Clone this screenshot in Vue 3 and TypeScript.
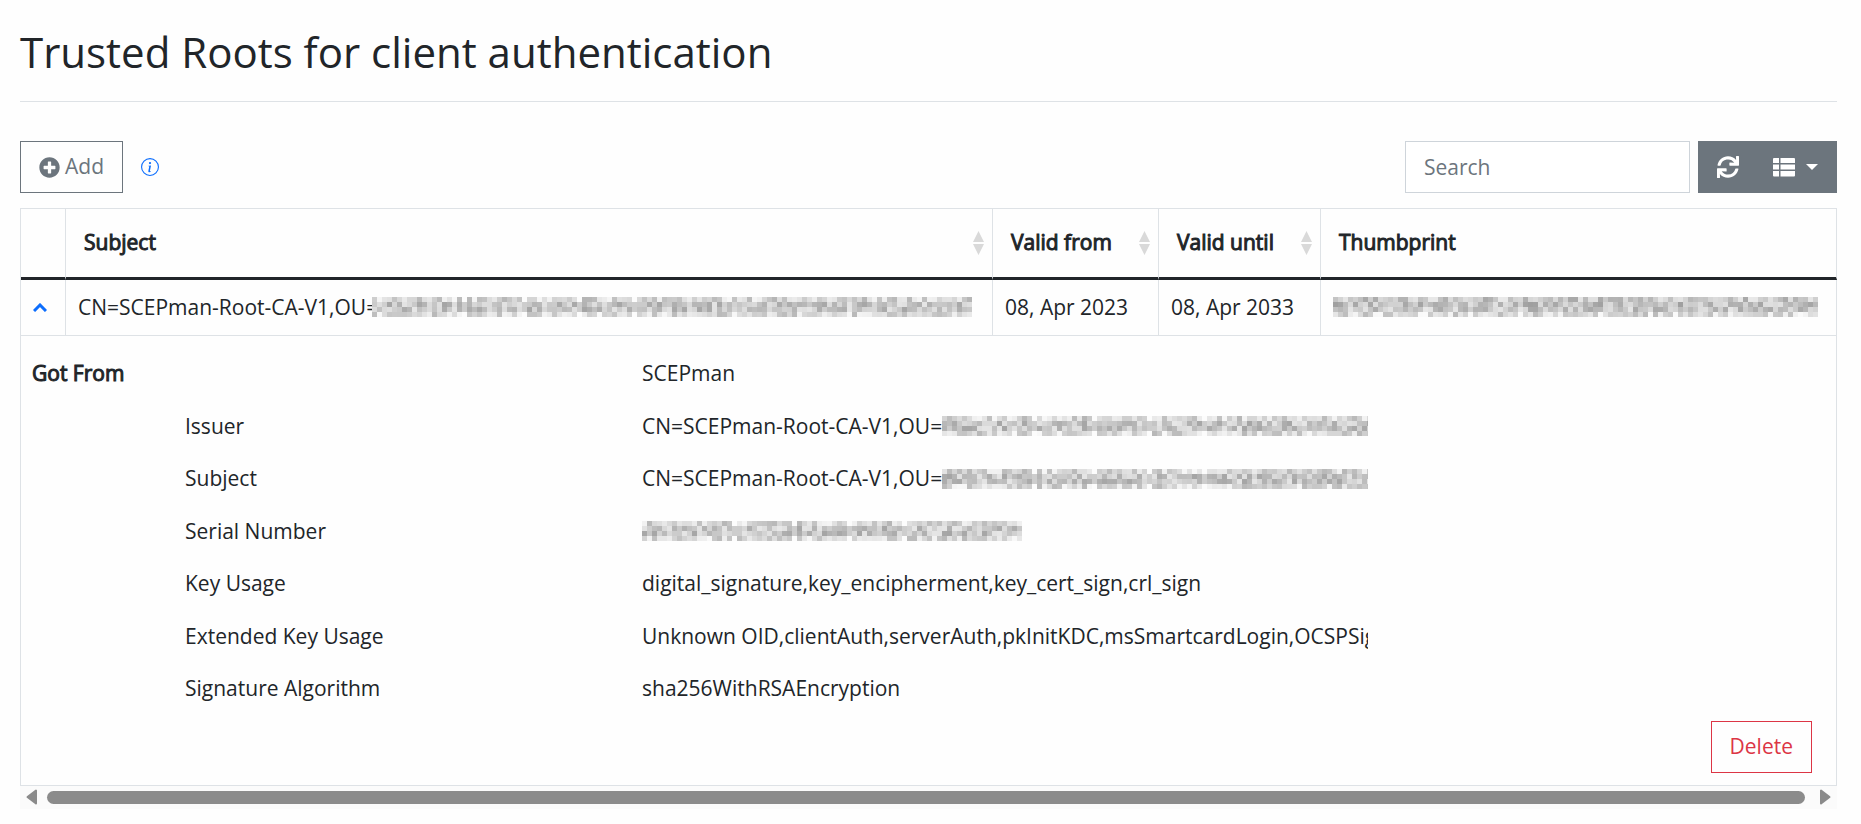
<script setup lang="ts">
import { ref } from 'vue'

interface Detail {
  label: string
  value: string
  mask?: { columns: number; seed: number }
}

interface Tile {
  x: number
  y: number
  fill: string
}

const TILE = 5
const search = ref('')
const expanded = ref(true)

const details: Detail[] = [
  { label: 'Issuer', value: 'CN=SCEPman-Root-CA-V1,OU=', mask: { columns: 86, seed: 11 } },
  { label: 'Subject', value: 'CN=SCEPman-Root-CA-V1,OU=', mask: { columns: 86, seed: 29 } },
  { label: 'Serial Number', value: '', mask: { columns: 76, seed: 47 } },
  { label: 'Key Usage', value: 'digital_signature,key_encipherment,key_cert_sign,crl_sign' },
  {
    label: 'Extended Key Usage',
    value: 'Unknown OID,clientAuth,serverAuth,pkInitKDC,msSmartcardLogin,OCSPSigning',
  },
  { label: 'Signature Algorithm', value: 'sha256WithRSAEncryption' },
]

// Grey mosaic that stands in for a redacted value.
function mosaic(columns: number, seed: number, dense = false): Tile[] {
  let state = seed
  const next = () => {
    state = (state * 16807) % 2147483647
    return state / 2147483647
  }
  for (let i = 0; i < 8; i++) next()
  const base = dense ? [200, 192, 200, 218] : [214, 198, 198, 216]
  const dashes = [18, 30, 41, 52]
  const tiles: Tile[] = []
  for (let c = 0; c < columns; c++) {
    const dash = !dense && dashes.includes(c)
    for (let r = 0; r < 4; r++) {
      const middle = r === 1 || r === 2
      let level = base[r] + Math.round((next() - 0.5) * 66)
      if (dash) level = middle ? 205 : 252
      level = Math.min(level, 254)
      tiles.push({ x: c * TILE, y: r * TILE, fill: `rgb(${level},${level},${level})` })
    }
  }
  return tiles
}

const subjectTiles = mosaic(120, 83)
const thumbTiles = mosaic(97, 61, true)
const detailTiles = details.map((d) => (d.mask ? mosaic(d.mask.columns, d.mask.seed) : []))
</script>

<template>
  <main class="page">
    <h1>Trusted Roots for client authentication</h1>

    <div class="toolbar">
      <button type="button" class="btn btn-add">
        <svg width="21" height="21" viewBox="0 0 512 512" aria-hidden="true">
          <path
            fill="currentColor"
            d="M256 8C119 8 8 119 8 256s111 248 248 248 248-111 248-248S393 8 256 8zm144 276c0 7-5 12-12 12h-92v92c0 7-5 12-12 12h-56c-7 0-12-5-12-12v-92h-92c-7 0-12-5-12-12v-56c0-7 5-12 12-12h92v-92c0-7 5-12 12-12h56c7 0 12 5 12 12v92h92c7 0 12 5 12 12v56z"
          />
        </svg>
        <span>Add</span>
      </button>
      <a href="#" class="info" aria-label="Information">
        <svg width="18" height="18" viewBox="0 0 16 16" aria-hidden="true">
          <path
            fill="currentColor"
            d="M8 15A7 7 0 1 1 8 1a7 7 0 0 1 0 14zm0 1A8 8 0 1 0 8 0a8 8 0 0 0 0 16z"
          />
          <path
            fill="currentColor"
            d="m8.93 6.588-2.29.287-.082.38.45.083c.294.07.352.176.288.469l-.738 3.468c-.194.897.105 1.319.808 1.319.545 0 1.178-.252 1.465-.598l.088-.416c-.2.176-.492.246-.686.246-.275 0-.375-.193-.304-.533L8.93 6.588zM9 4.5a1 1 0 1 1-2 0 1 1 0 0 1 2 0z"
          />
        </svg>
      </a>
      <input v-model="search" type="search" class="search" placeholder="Search" aria-label="Search" />
      <div class="group">
        <button type="button" class="btn btn-solid" aria-label="Refresh">
          <svg width="22" height="22" viewBox="0 0 512 512" aria-hidden="true">
            <path
              fill="currentColor"
              d="M440.65 12.57l4 82.77A247.160 247.160 0 0 0 255.830 8C134.730 8 33.910 94.920 12.290 209.820A12 12 0 0 0 24.090 224h49.050a12 12 0 0 0 11.670-9.260 175.910 175.910 0 0 1 317-56.940l-101.460-4.860a12 12 0 0 0-12.570 12v47.410a12 12 0 0 0 12 12H500a12 12 0 0 0 12-12V12a12 12 0 0 0-12-12h-47.370a12 12 0 0 0-11.980 12.570zM255.830 432a175.610 175.610 0 0 1-146-77.800l101.800 4.870a12 12 0 0 0 12.570-12v-47.400a12 12 0 0 0-12-12H12a12 12 0 0 0-12 12V500a12 12 0 0 0 12 12h47.350a12 12 0 0 0 12-12.600l-4.150-82.570A247.170 247.170 0 0 0 255.830 504c121.110 0 221.930-86.920 243.550-201.820a12 12 0 0 0-11.800-14.180h-49.050a12 12 0 0 0-11.670 9.260A175.860 175.860 0 0 1 255.830 432z"
            />
          </svg>
        </button>
        <button type="button" class="btn btn-solid btn-columns" aria-label="Columns">
          <svg width="22" height="22" viewBox="0 0 22 22" aria-hidden="true">
            <g fill="currentColor">
              <path d="M1 2h5v5H0V3q0-1 1-1z" />
              <path d="M7.500 2H21q1 0 1 1v4H7.500z" />
              <path d="M0 8.500h6v5H0z" />
              <path d="M7.500 8.500H22v5H7.500z" />
              <path d="M0 15h6v5.500H1q-1 0-1-1z" />
              <path d="M7.500 15H22v4.500q0 1-1 1H7.500z" />
            </g>
          </svg>
          <svg width="12" height="6" viewBox="0 0 12 6" aria-hidden="true">
            <path fill="currentColor" d="M0 0h12L6 6z" />
          </svg>
        </button>
      </div>
    </div>

    <div class="table-wrap">
      <table>
        <colgroup>
          <col class="c-toggle" />
          <col />
          <col class="c-from" />
          <col class="c-until" />
          <col class="c-thumb" />
        </colgroup>
        <thead>
          <tr>
            <th aria-label="Expand"></th>
            <th v-for="name in ['Subject', 'Valid from', 'Valid until']" :key="name" scope="col">
              <div class="th-inner">
                <span class="strong">{{ name }}</span>
                <svg width="11" height="24" viewBox="0 0 11 24" aria-hidden="true">
                  <path fill="#d9d9d9" d="M5.500 0 11 11H0zM0 13h11L5.500 24z" />
                </svg>
              </div>
            </th>
            <th scope="col">
              <div class="th-inner"><span class="strong">Thumbprint</span></div>
            </th>
          </tr>
        </thead>
        <tbody>
          <tr class="record">
            <td>
              <button
                type="button"
                class="toggle"
                aria-label="Toggle details"
                :aria-expanded="expanded"
                @click="expanded = !expanded"
              >
                <svg width="14" height="9" viewBox="0 0 14 9" aria-hidden="true">
                  <path d="M1 8l6-6 6 6" fill="none" stroke="currentColor" stroke-width="3" />
                </svg>
              </button>
            </td>
            <td>
              <div class="value">
                <span>CN=SCEPman-Root-CA-V1,OU=</span>
                <svg class="mask" width="600" height="20" shape-rendering="crispEdges" aria-hidden="true">
                  <rect v-for="(t, i) in subjectTiles" :key="i" :x="t.x" :y="t.y" width="5" height="5" :fill="t.fill" />
                </svg>
              </div>
            </td>
            <td>08, Apr 2023</td>
            <td>08, Apr 2033</td>
            <td>
              <div class="value">
                <svg class="mask" width="485" height="20" shape-rendering="crispEdges" aria-hidden="true">
                  <rect v-for="(t, i) in thumbTiles" :key="i" :x="t.x" :y="t.y" width="5" height="5" :fill="t.fill" />
                </svg>
              </div>
            </td>
          </tr>
          <tr v-if="expanded">
            <td colspan="5" class="detail-cell">
              <dl class="details">
                <div class="line">
                  <dt class="lead strong">Got From</dt>
                  <dd>SCEPman</dd>
                </div>
                <div v-for="(d, n) in details" :key="d.label" class="line">
                  <dt>{{ d.label }}</dt>
                  <dd class="value">
                    <span v-if="d.value">{{ d.value }}</span>
                    <svg
                      v-if="d.mask"
                      class="mask"
                      :width="d.mask.columns * TILE"
                      height="20"
                      shape-rendering="crispEdges"
                      aria-hidden="true"
                    >
                      <rect
                        v-for="(t, i) in detailTiles[n]"
                        :key="i"
                        :x="t.x"
                        :y="t.y"
                        width="5"
                        height="5"
                        :fill="t.fill"
                      />
                    </svg>
                  </dd>
                </div>
              </dl>
              <div class="actions">
                <button type="button" class="btn btn-delete">Delete</button>
              </div>
            </td>
          </tr>
        </tbody>
      </table>
    </div>

    <div class="scrollbar" aria-hidden="true">
      <svg width="12" height="16" viewBox="0 0 12 16">
        <path d="M10 1.500v13L1.500 8z" fill="#8b8b8b" stroke="#8b8b8b" stroke-width="2" stroke-linejoin="round" />
      </svg>
      <div class="thumb"></div>
      <svg width="12" height="16" viewBox="0 0 12 16">
        <path d="M2 1.500v13L10.500 8z" fill="#8b8b8b" stroke="#8b8b8b" stroke-width="2" stroke-linejoin="round" />
      </svg>
    </div>
  </main>
</template>

<style>
body {
  margin: 0;
  background: #fefefe;
}
</style>

<style scoped>
.page {
  box-sizing: border-box;
  padding: 27px 24px 14px 20px;
  font: 400 21px/1.5 'Open Sans', 'Noto Sans', sans-serif;
  color: #212529;
}
h1 {
  margin: 0 0 39px;
  padding-bottom: 24px;
  border-bottom: 1px solid #dee2e6;
  font-size: 42px;
  font-weight: 400;
  line-height: 50px;
}
.strong {
  font-weight: 400;
  -webkit-text-stroke: 1px currentColor;
}
.toolbar {
  display: flex;
  align-items: center;
  margin-bottom: 15px;
}
.btn {
  display: inline-flex;
  align-items: center;
  justify-content: center;
  box-sizing: border-box;
  height: 52px;
  padding: 0 18px;
  border: 1px solid transparent;
  border-radius: 0;
  background: transparent;
  font: inherit;
  cursor: pointer;
}
.btn-add {
  gap: 5px;
  border-color: #6c757d;
  color: #6c757d;
}
.info {
  display: flex;
  margin-left: 18px;
  color: #0d6efd;
}
.search {
  box-sizing: border-box;
  width: 285px;
  height: 52px;
  margin: 0 8px 0 auto;
  padding: 0 18px;
  border: 1px solid #ced4da;
  border-radius: 0;
  background: #fff;
  font: inherit;
  color: #212529;
  appearance: none;
}
.search::placeholder {
  color: #6c757d;
  opacity: 1;
}
.group {
  display: flex;
}
.btn-solid {
  background: #6c757d;
  color: #fff;
}
.btn-columns {
  gap: 11px;
  padding: 0 18px 0 14px;
}
table {
  width: 100%;
  border-collapse: separate;
  border-spacing: 0;
  border-top: 1px solid #dee2e6;
  border-left: 1px solid #dee2e6;
  table-layout: fixed;
}
.c-toggle {
  width: 45px;
}
.c-from {
  width: 166px;
}
.c-until {
  width: 162px;
}
.c-thumb {
  width: 516px;
}
th,
td {
  padding: 12px;
  border-right: 1px solid #dee2e6;
  border-bottom: 1px solid #dee2e6;
  font-weight: 400;
  text-align: left;
  white-space: nowrap;
}
th {
  padding: 18px 8px 18px 18px;
  border-bottom: 3px solid #212529;
}
.th-inner {
  display: flex;
  align-items: center;
  justify-content: space-between;
}
.toggle {
  display: flex;
  padding: 0;
  border: 0;
  background: none;
  color: #0d6efd;
  cursor: pointer;
}
.value {
  display: flex;
  align-items: center;
}
.mask {
  flex: none;
}
.record td {
  overflow: hidden;
}
.record .value {
  overflow: hidden;
}
.record span + .mask {
  margin-left: -6px;
}
td.detail-cell {
  padding: 12px 11px 11px;
}
.details {
  display: flex;
  flex-direction: column;
  gap: 1px;
  margin: 0;
}
.line {
  display: grid;
  grid-template-columns: 153fr 457fr 726fr 457fr;
}
.line > * {
  margin: 0;
  padding: 10px 0;
  min-width: 0;
}
.line dt {
  grid-column: 2;
}
.line dt.lead {
  grid-column: 1 / 3;
}
.line dd {
  grid-column: 3;
  min-height: 31px;
  overflow: hidden;
}
.actions {
  display: flex;
  justify-content: flex-end;
  padding: 6px 13px 1px 0;
}
.btn-delete {
  border-color: #dc3545;
  color: #dc3545;
}
.scrollbar {
  display: flex;
  align-items: center;
  gap: 9px;
  height: 23px;
  padding: 0 6px;
  background: #fbfbfb;
}
.thumb {
  flex: 1;
  height: 13px;
  margin-right: 5px;
  border-radius: 7px;
  background: #8b8b8b;
}
</style>
